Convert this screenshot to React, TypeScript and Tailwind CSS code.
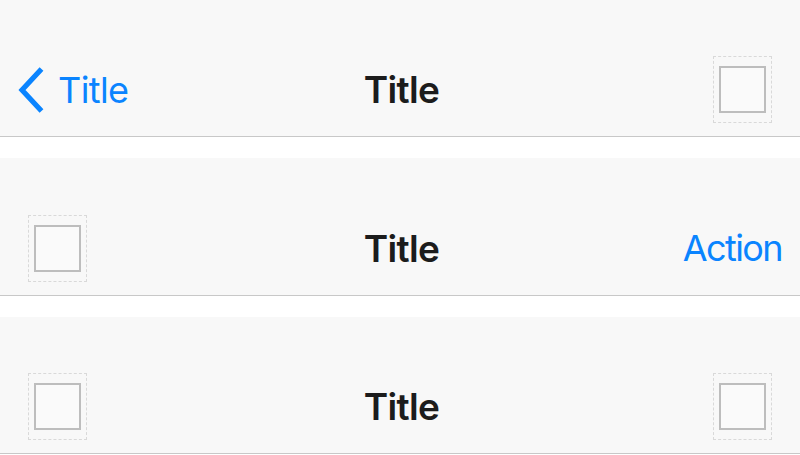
import React from "react";

const font = { fontFamily: 'Inter, "Noto Sans", sans-serif' };

function Placeholder() {
  return (
    <div className="w-[59px] h-[67px] flex items-center justify-center border border-dashed border-[#d9d9d9]">
      <div className="w-[47px] h-[47px] border-2 border-[#bdbdbd] bg-[#fafafa]" />
    </div>
  );
}

function Bar({ left, right, tall }: { left: React.ReactNode; right: React.ReactNode; tall?: boolean }) {
  return (
    <div className={`${tall ? "h-[138px]" : "h-[137px]"} bg-[#f8f8f8] border-b border-[#c8c8c8] flex flex-col`}>
      <div className="h-[43px]" />
      <div className="flex-1 grid grid-cols-[1fr_auto_1fr] items-center">
        <div className="flex items-center justify-start">{left}</div>
        <div className="text-[37px] font-semibold text-[#1c1c1c] leading-none tracking-[-0.7px] pl-[3px]">Title</div>
        <div className="flex items-center justify-end">{right}</div>
      </div>
    </div>
  );
}

export default function App() {
  return (
    <div className="w-[800px] h-[455px] bg-white overflow-hidden flex flex-col gap-[21px]" style={font}>
      <Bar
        left={
          <div className="flex items-center pl-[17px] text-[#0a84ff]">
            <svg width="28" height="48" viewBox="0 0 28 48" className="mt-[1px]">
              <polyline points="24.5,3 5,24 24.5,45" fill="none" stroke="#0a84ff" strokeWidth="5.2" strokeLinejoin="miter" />
            </svg>
            <span className="ml-[13px] text-[36px] leading-none tracking-[-0.6px]">Title</span>
          </div>
        }
        right={<div className="pr-[28px]"><Placeholder /></div>}
      />
      <Bar
        tall
        left={<div className="pl-[28px]"><Placeholder /></div>}
        right={<span className="pr-[18px] text-[36px] leading-none text-[#0a84ff] tracking-[-1.6px]">Action</span>}
      />
      <Bar
        left={<div className="pl-[28px]"><Placeholder /></div>}
        right={<div className="pr-[28px]"><Placeholder /></div>}
      />
    </div>
  );
}
